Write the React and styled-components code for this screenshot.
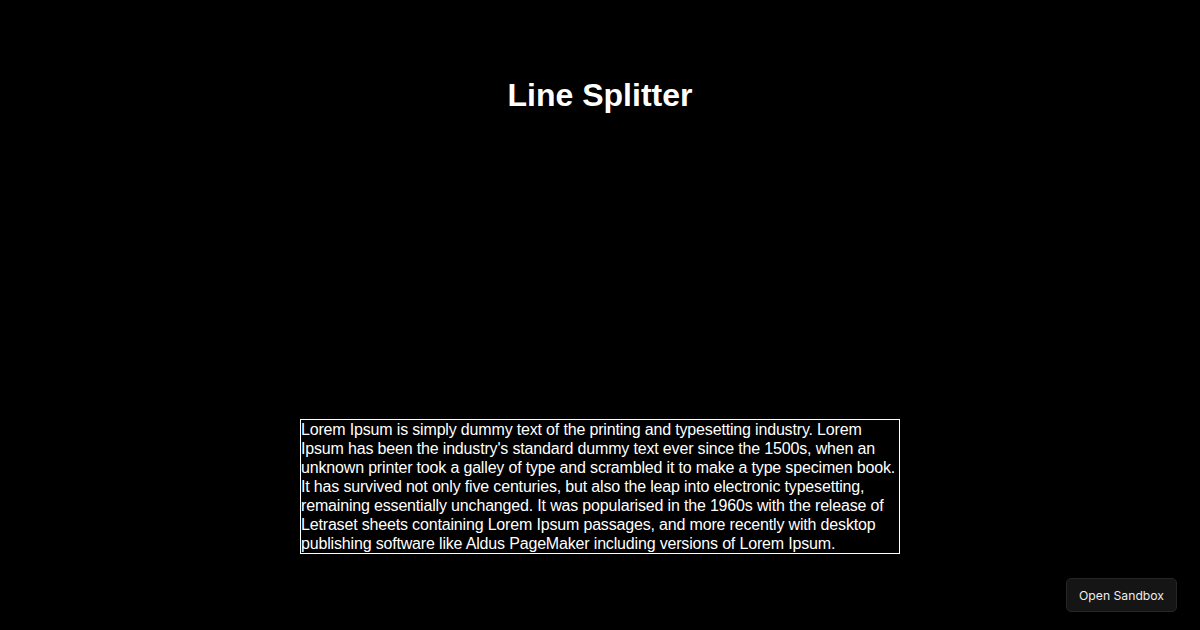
import React from 'react';
import styled, { createGlobalStyle } from 'styled-components';

const GlobalStyle = createGlobalStyle`
  html, body {
    margin: 0;
    padding: 0;
    background: #000;
    color: #fff;
    font-family: "Liberation Sans", Arial, sans-serif;
  }
`;

const Page = styled.main`
  min-height: 630px;
  display: flex;
  flex-direction: column;
  align-items: center;
`;

const Title = styled.h1`
  margin: 77px 0 0;
  font-size: 32px;
  line-height: 37px;
  font-weight: 700;
`;

const TextBox = styled.p`
  margin: 305px 0 0;
  width: 598px;
  border: 1px solid #fff;
  font-size: 16px;
  line-height: 19px;
  letter-spacing: -0.17px;
`;

const SandboxButton = styled.button`
  position: fixed;
  right: 23px;
  bottom: 18px;
  height: 34px;
  padding: 0 12px;
  background: #151515;
  border: 1px solid #262626;
  border-radius: 5px;
  color: #eee;
  font-family: Inter, "Noto Sans", sans-serif;
  font-size: 12.2px;
  cursor: pointer;
`;

const lorem =
  "Lorem Ipsum is simply dummy text of the printing and typesetting industry. Lorem Ipsum has been the industry's standard dummy text ever since the 1500s, when an unknown printer took a galley of type and scrambled it to make a type specimen book. It has survived not only five centuries, but also the leap into electronic typesetting, remaining essentially unchanged. It was popularised in the 1960s with the release of Letraset sheets containing Lorem Ipsum passages, and more recently with desktop publishing software like Aldus PageMaker including versions of Lorem Ipsum.";

export default function App() {
  return (
    <>
      <GlobalStyle />
      <Page>
        <Title>Line Splitter</Title>
        <TextBox>{lorem}</TextBox>
      </Page>
      <SandboxButton>Open Sandbox</SandboxButton>
    </>
  );
}
